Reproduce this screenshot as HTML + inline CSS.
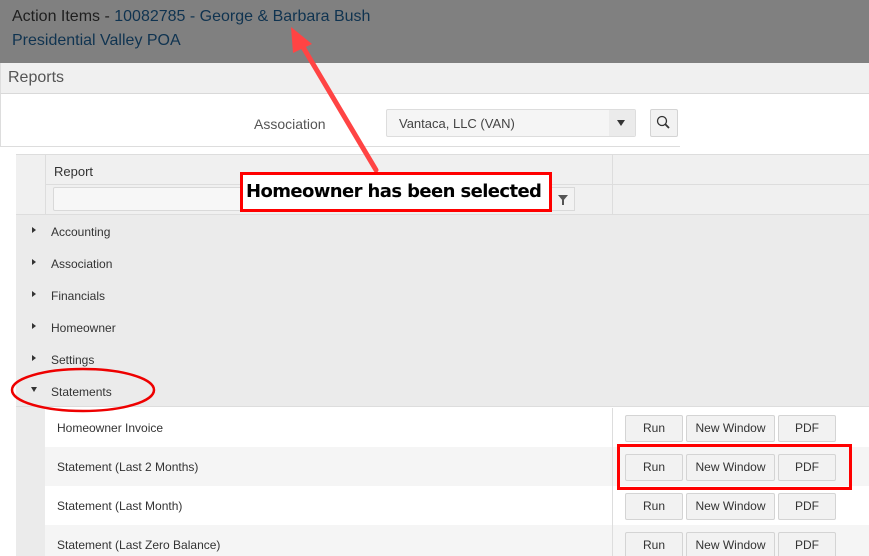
<!DOCTYPE html>
<html><head><style>
*{margin:0;padding:0;box-sizing:border-box}
html,body{width:869px;height:556px;overflow:hidden}
body{position:relative;background:#fff;font-family:"Liberation Sans",sans-serif;color:#333}
.a{position:absolute}
.btn{position:absolute;height:27px;background:#f2f2f2;border:1px solid #d4d4d4;border-radius:2px;font-size:12px;color:#333;text-align:center;line-height:25px}
.grp{position:absolute;left:16px;width:853px;height:32px;background:#ebebeb;font-size:12px}
.grp span{position:absolute;left:35px;top:10px}
.grp i{position:absolute;left:16px;top:12px;width:0;height:0;border-left:4px solid #333;border-top:3px solid transparent;border-bottom:3px solid transparent}
.row{position:absolute;left:45px;width:824px;height:39px;font-size:12px}
.row span{position:absolute;left:12px;top:13px}
</style></head><body>
<div class="a" style="left:0;top:0;width:869px;height:63px;background:#808080"></div>
<div class="a" style="left:12px;top:8px;font-size:16px;color:#1e1e1e">Action Items - <span style="color:#0f3350">10082785 - George &amp; Barbara Bush</span></div>
<div class="a" style="left:12px;top:32px;font-size:16px;color:#0f3350">Presidential Valley POA</div>
<div class="a" style="left:0;top:63px;width:869px;height:31px;background:#f0f0f0;border-bottom:1px solid #d9d9d9;border-left:1px solid #ddd"></div>
<div class="a" style="left:8px;top:69px;font-size:16px;color:#555">Reports</div>
<div class="a" style="left:0;top:94px;width:680px;height:53px;border-bottom:1px solid #ddd;border-left:1px solid #ddd"></div>
<div class="a" style="left:254px;top:116px;font-size:14px;color:#555">Association</div>
<div class="a" style="left:386px;top:109px;width:250px;height:28px;background:#f5f5f5;border:1px solid #ddd;border-radius:2px;font-size:13px;color:#444;padding:6px 12px">Vantaca, LLC (VAN)</div>
<div class="a" style="left:609px;top:110px;width:26px;height:26px;background:#ebebeb"></div>
<div class="a" style="left:617px;top:120px;border-left:4px solid transparent;border-right:4px solid transparent;border-top:6px solid #333"></div>
<div class="a" style="left:650px;top:109px;width:28px;height:28px;background:#f2f2f2;border:1px solid #d4d4d4;border-radius:2px"></div>
<svg class="a" style="left:655px;top:114px" width="18" height="18"><circle cx="7" cy="7" r="4.5" fill="none" stroke="#333" stroke-width="1.3"/><line x1="10.3" y1="10.3" x2="14" y2="14" stroke="#333" stroke-width="1.8"/></svg>
<div class="a" style="left:16px;top:154px;width:853px;height:61px;background:#f0f0f0;border-top:1px solid #ddd;border-bottom:1px solid #ddd"></div>
<div class="a" style="left:45px;top:154px;width:1px;height:61px;background:#ddd"></div>
<div class="a" style="left:612px;top:154px;width:1px;height:61px;background:#ddd"></div>
<div class="a" style="left:45px;top:184px;width:824px;height:1px;background:#ddd"></div>
<div class="a" style="left:54px;top:164px;font-size:13px">Report</div>
<div class="a" style="left:53px;top:187px;width:496px;height:24px;background:#f7f7f7;border:1px solid #d9d9d9;border-radius:2px"></div>
<div class="a" style="left:551px;top:187px;width:24px;height:24px;background:#f2f2f2;border:1px solid #d9d9d9"></div>
<div class="a" style="left:558px;top:195px;border-left:5px solid transparent;border-right:5px solid transparent;border-top:6px solid #555"></div>
<div class="a" style="left:562px;top:199px;width:2px;height:6px;background:#555"></div>
<div class="a" style="left:16px;top:215px;width:29px;height:341px;background:#ebebeb"></div>
<div class="grp" style="top:215px"><i></i><span>Accounting</span></div>
<div class="grp" style="top:247px"><i></i><span>Association</span></div>
<div class="grp" style="top:279px"><i></i><span>Financials</span></div>
<div class="grp" style="top:311px"><i></i><span>Homeowner</span></div>
<div class="grp" style="top:343px"><i></i><span>Settings</span></div>
<div class="grp" style="top:375px;height:32px;border-bottom:1px solid #ddd"><i style="left:15px;top:12px;border-left:3px solid transparent;border-right:3px solid transparent;border-top:5px solid #333;border-bottom:0"></i><span>Statements</span></div>
<div class="row" style="top:408px;background:#fff"><span>Homeowner Invoice</span></div>
<div class="row" style="top:447px;background:#f5f5f5"><span>Statement (Last 2 Months)</span></div>
<div class="row" style="top:486px;background:#fff"><span>Statement (Last Month)</span></div>
<div class="row" style="top:525px;background:#f5f5f5"><span>Statement (Last Zero Balance)</span></div>
<div class="a" style="left:612px;top:408px;width:1px;height:148px;background:#ddd"></div>
<div class="btn" style="left:625px;top:415px;width:58px">Run</div><div class="btn" style="left:686px;top:415px;width:89px">New Window</div><div class="btn" style="left:778px;top:415px;width:58px">PDF</div>
<div class="btn" style="left:625px;top:454px;width:58px">Run</div><div class="btn" style="left:686px;top:454px;width:89px">New Window</div><div class="btn" style="left:778px;top:454px;width:58px">PDF</div>
<div class="btn" style="left:625px;top:493px;width:58px">Run</div><div class="btn" style="left:686px;top:493px;width:89px">New Window</div><div class="btn" style="left:778px;top:493px;width:58px">PDF</div>
<div class="btn" style="left:625px;top:532px;width:58px">Run</div><div class="btn" style="left:686px;top:532px;width:89px">New Window</div><div class="btn" style="left:778px;top:532px;width:58px">PDF</div>
<div class="a" style="left:617px;top:444px;width:235px;height:46px;border:3px solid #f00"></div>
<svg class="a" style="left:0;top:0" width="869" height="556">
<line x1="376" y1="170" x2="300" y2="42" stroke="#f44" stroke-width="5" stroke-linecap="round"/>
<polygon points="291,27 312,44 293,53" fill="#f44"/>
<ellipse cx="83" cy="390" rx="71" ry="21" fill="none" stroke="#e00" stroke-width="2.5"/>
</svg>
<div class="a" style="left:240px;top:172px;width:312px;height:40px;border:3px solid #f00;background:#fff;font-family:'DejaVu Sans',sans-serif;font-weight:bold;font-size:18px;color:#000;padding:6px 0 0 3px;white-space:nowrap;letter-spacing:-0.6px">Homeowner has been selected</div>
</body></html>
